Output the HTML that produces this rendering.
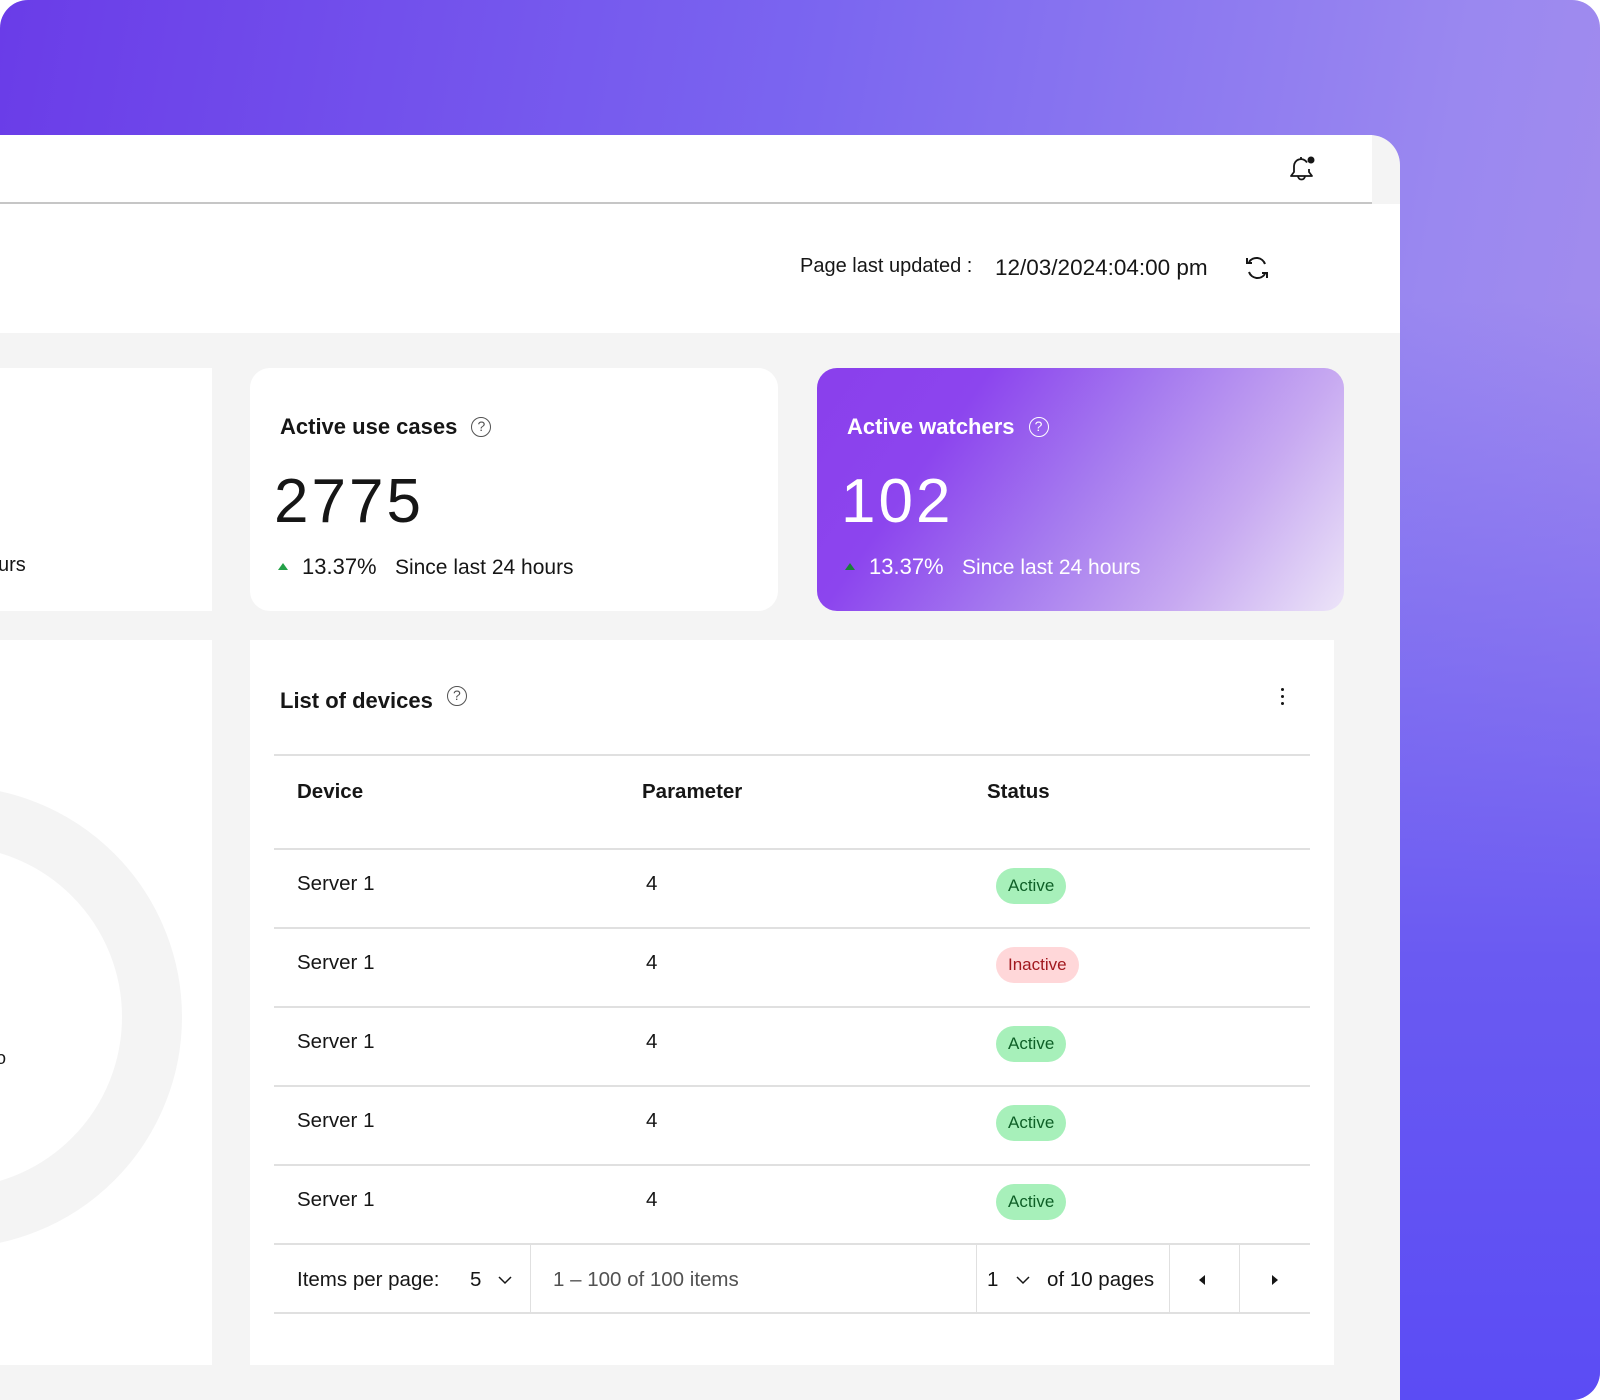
<!DOCTYPE html>
<html><head><meta charset="utf-8"><style>
*{margin:0;padding:0;box-sizing:border-box}
html,body{width:1600px;height:1400px;overflow:hidden;background:#fff;font-family:"Liberation Sans",sans-serif;color:#161616}
.bg{position:absolute;left:0;top:0;width:1600px;height:1400px;border-radius:28px;background:linear-gradient(100deg,#6a3ce8 0%,#7b66f0 45%,#9a88f0 80%,#a88fec 100%);overflow:hidden}
.bg:after{content:"";position:absolute;left:1400px;top:300px;width:200px;height:1100px;background:linear-gradient(180deg,rgba(120,110,240,0) 0%,#6a5af2 60%,#5b4cf4 100%)}
.app{position:absolute;left:0;top:135px;width:1400px;height:1265px;background:#f4f4f4;border-top-right-radius:30px;overflow:hidden}
.hdr{position:absolute;left:0;top:0;width:1372px;height:69px;background:#fff;border-bottom:2px solid #c6c6c6}
.bar{position:absolute;left:0;top:69px;width:1400px;height:129px;background:#fff}
.abs{position:absolute;white-space:nowrap}
.card{position:absolute;background:#fff}
.t{font-size:22px;font-weight:bold}
.q{display:inline-block;width:20px;height:20px;border:1.5px solid #525252;border-radius:50%;font-size:14px;text-align:center;line-height:17px;color:#525252;font-weight:normal;vertical-align:3px;margin-left:14px}
.big{font-size:62px;font-weight:300;letter-spacing:3px}
.tri{display:inline-block;width:0;height:0;border-left:5px solid transparent;border-right:5px solid transparent;border-bottom:7px solid #24a148;vertical-align:4px;margin-right:14px}
.row{position:absolute;left:274px;width:1036px;border-top:2px solid #e0e0e0}
.cell{position:absolute;font-size:20.5px}
.tag{position:absolute;height:36px;border-radius:18px;font-size:17px;line-height:36px;padding:0 12px}
.act{background:#a7f0ba;color:#0e6027}
.ina{background:#ffd7d9;color:#a2191f}
</style></head><body>
<div class="bg"></div>
<div class="app">
 <div class="hdr"></div>
 <svg class="abs" style="left:1286px;top:18px" width="34" height="34" viewBox="0 0 34 34" fill="none" stroke="#161616" stroke-width="1.8" stroke-linejoin="round"><path d="M15 4v3"/><path d="M21 9.5A7 7 0 0 0 8 13v6l-3 4h21l-3-4v-3"/><path d="M12 23a3.5 3.5 0 0 0 7 0"/><circle cx="25" cy="7" r="3.5" fill="#161616" stroke="none"/></svg>
 <div class="bar"></div>
 <div class="abs" style="left:800px;top:120px;font-size:20px">Page last updated :</div>
 <div class="abs" style="left:995px;top:120px;font-size:22.5px">12/03/2024:04:00 pm</div>
 <svg class="abs" style="left:1242px;top:118px" width="30" height="30" viewBox="0 0 30 30" fill="none" stroke="#161616" stroke-width="2"><path d="M23 11A9 9 0 0 0 7 9M5 5v5h5"/><path d="M7 19a9 9 0 0 0 16 2M25 25v-5h-5"/></svg>

 <div class="card" style="left:0;top:233px;width:212px;height:243px"><div class="abs" style="left:-2px;top:186px;font-size:20px">urs</div></div>
 <div class="card" style="left:250px;top:233px;width:528px;height:243px;border-radius:20px">
  <div class="abs t" style="left:30px;top:46px">Active use cases<span class="q">?</span></div>
  <div class="abs big" style="left:24px;top:98px">2775</div>
  <div class="abs" style="left:28px;top:186px;font-size:22px"><span class="tri"></span>13.37%&nbsp;&nbsp; <span style="font-size:21px">Since last 24 hours</span></div>
 </div>
 <div class="card" style="left:817px;top:233px;width:527px;height:243px;border-radius:20px;background:linear-gradient(125deg,#8a3fec 0%,#8c45ee 25%,#a57aef 50%,#c7a9f1 75%,#ece4f8 100%);color:#fff">
  <div class="abs t" style="left:30px;top:46px">Active watchers<span class="q" style="border-color:#fff;color:#fff">?</span></div>
  <div class="abs big" style="left:24px;top:98px">102</div>
  <div class="abs" style="left:28px;top:186px;font-size:22px"><span class="tri" style="border-bottom-color:#198038"></span>13.37%&nbsp;&nbsp; <span style="font-size:21px">Since last 24 hours</span></div>
 </div>

 <div class="card" style="left:0;top:505px;width:212px;height:725px;overflow:hidden">
  <div class="abs" style="left:-280px;top:146px;width:462px;height:462px;border-radius:50%;border:60px solid #f4f4f4"></div>
  <div class="abs" style="left:-4px;top:408px;font-size:18px">o</div>
 </div>
 <div class="card" style="left:250px;top:505px;width:1084px;height:725px"></div>
</div>
<div class="abs t" style="left:280px;top:686px">List of devices<span class="q" style="vertical-align:8px">?</span></div>
<div class="abs" style="left:1281px;top:688px;width:4px;line-height:0"><div style="width:3px;height:3px;background:#161616;border-radius:50%;margin-bottom:4px"></div><div style="width:3px;height:3px;background:#161616;border-radius:50%;margin-bottom:4px"></div><div style="width:3px;height:3px;background:#161616;border-radius:50%"></div></div>
<div class="row" style="top:754px"></div>
<div class="cell" style="left:297px;top:780px;font-weight:bold">Device</div>
<div class="cell" style="left:642px;top:780px;font-weight:bold">Parameter</div>
<div class="cell" style="left:987px;top:780px;font-weight:bold">Status</div>

<div class="row" style="top:848px"></div>
<div class="cell" style="left:297px;top:872px">Server 1</div><div class="cell" style="left:646px;top:872px">4</div><div class="tag act" style="left:996px;top:868px">Active</div>
<div class="row" style="top:927px"></div>
<div class="cell" style="left:297px;top:951px">Server 1</div><div class="cell" style="left:646px;top:951px">4</div><div class="tag ina" style="left:996px;top:947px">Inactive</div>
<div class="row" style="top:1006px"></div>
<div class="cell" style="left:297px;top:1030px">Server 1</div><div class="cell" style="left:646px;top:1030px">4</div><div class="tag act" style="left:996px;top:1026px">Active</div>
<div class="row" style="top:1085px"></div>
<div class="cell" style="left:297px;top:1109px">Server 1</div><div class="cell" style="left:646px;top:1109px">4</div><div class="tag act" style="left:996px;top:1105px">Active</div>
<div class="row" style="top:1164px"></div>
<div class="cell" style="left:297px;top:1188px">Server 1</div><div class="cell" style="left:646px;top:1188px">4</div><div class="tag act" style="left:996px;top:1184px">Active</div>
<div class="row" style="top:1243px"></div>
<div class="row" style="top:1312px"></div>
<div class="abs" style="left:530px;top:1244px;width:1px;height:69px;background:#e0e0e0"></div>
<div class="abs" style="left:976px;top:1244px;width:1px;height:69px;background:#e0e0e0"></div>
<div class="abs" style="left:1169px;top:1244px;width:1px;height:69px;background:#e0e0e0"></div>
<div class="abs" style="left:1239px;top:1244px;width:1px;height:69px;background:#e0e0e0"></div>
<div class="cell" style="left:297px;top:1268px">Items per page:</div>
<div class="cell" style="left:470px;top:1268px">5</div>
<svg class="abs" style="left:497px;top:1272px" width="16" height="16" viewBox="0 0 16 16" fill="none" stroke="#161616" stroke-width="1.5"><path d="M2 5l6 6 6-6"/></svg>
<div class="cell" style="left:553px;top:1268px;color:#525252">1 – 100 of 100 items</div>
<div class="cell" style="left:987px;top:1268px">1</div>
<svg class="abs" style="left:1015px;top:1272px" width="16" height="16" viewBox="0 0 16 16" fill="none" stroke="#161616" stroke-width="1.5"><path d="M2 5l6 6 6-6"/></svg>
<div class="cell" style="left:1047px;top:1268px">of 10 pages</div>
<svg class="abs" style="left:1197px;top:1272px" width="12" height="16" viewBox="0 0 12 16"><path d="M8 3v10L2 8z" fill="#161616"/></svg>
<svg class="abs" style="left:1268px;top:1272px" width="12" height="16" viewBox="0 0 12 16"><path d="M4 3v10l6-5z" fill="#161616"/></svg>
</body></html>
